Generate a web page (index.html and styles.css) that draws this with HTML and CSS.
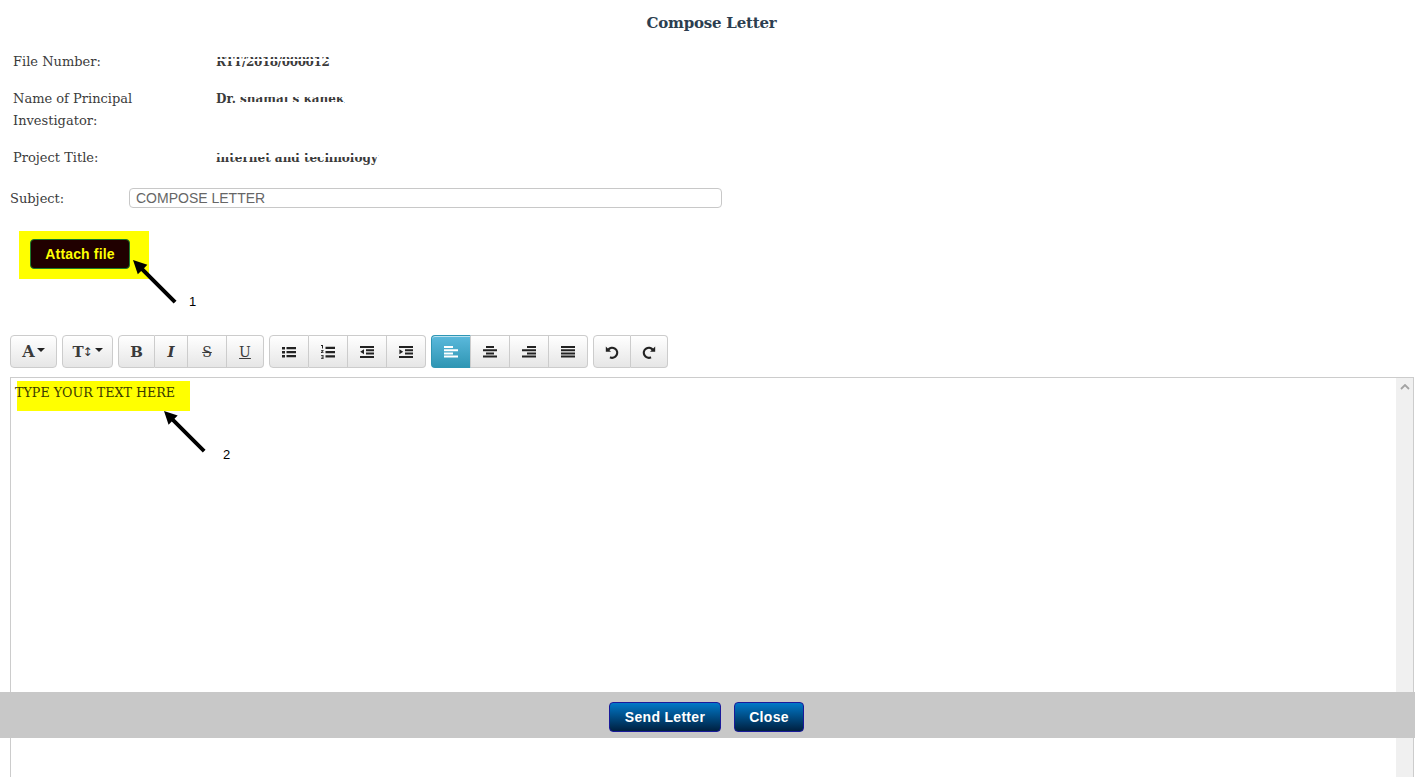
FILE: index.html
```html
<!DOCTYPE html>
<html lang="en">
<head>
  <meta charset="UTF-8">
  <title>Compose Letter</title>
  <link rel="stylesheet" href="styles.css">
</head>
<body>

  <h1 class="title">Compose Letter</h1>

  <table class="info">
    <tr>
      <td class="info-label">File Number:</td>
      <td><span class="hidden-value hide-file">RTT/2018/000012</span></td>
    </tr>
    <tr>
      <td class="info-label">Name of Principal Investigator:</td>
      <td><span class="hidden-value hide-name">Dr. shamal s kanek</span></td>
    </tr>
    <tr>
      <td class="info-label">Project Title:</td>
      <td><span class="hidden-value hide-project">internet and technology</span></td>
    </tr>
  </table>

  <div class="subject">
    <label class="subject-label" for="subject">Subject:</label>
    <input class="subject-input" type="text" id="subject" value="COMPOSE LETTER">
  </div>

  <div class="attach">
    <div class="attach-mark">
      <button class="btn-attach" type="button">Attach file</button>
    </div>
  </div>

  <div class="toolbar">
    <div class="group">
      <button class="tool tool-a" type="button"><span class="tool-letter">A</span><i class="caret"></i></button>
    </div>
    <div class="group">
      <button class="tool tool-t" type="button"><span class="tool-letter">T</span><span class="tool-arrow">↕</span><i class="caret"></i></button>
    </div>
    <div class="group">
      <button class="tool w37" type="button"><b class="tool-letter">B</b></button>
      <button class="tool w33" type="button"><i class="tool-letter tool-bold">I</i></button>
      <button class="tool w39" type="button"><s class="tool-letter small">S</s></button>
      <button class="tool w37" type="button"><u class="tool-letter small">U</u></button>
    </div>
    <div class="group">
      <button class="tool w40" type="button">
        <svg class="icon" viewBox="0 0 16 14"><path d="M1 2h3v2.400H1zM1 6h3v2.400H1zM1 10h3v2.400H1zM5.500 2.100H15v2.200H5.500zM5.500 6.100H15v2.200H5.500zM5.500 10.100H15v2.200H5.500z"/></svg>
      </button>
      <button class="tool w39" type="button">
        <svg class="icon" viewBox="0 0 16 14"><path d="M1 0h2v3.600H2V1H1zM1 5h2.500v1L2 7.200h1.500V8H1V7l1.600-1.200H1zM1 10h2.500v4H1v-.8h1.600v-.8H1.400v-.7h1.200v-.9H1zM5.500 1.700H15v2.200H5.500zM5.500 6H15v2.200H5.500zM5.500 10.300H15v2.200H5.500z"/></svg>
      </button>
      <button class="tool w39" type="button">
        <svg class="icon" viewBox="0 0 16 14"><path d="M1 1h14v2H1zM7 4.200h8v2H7zM7 7.400h8v2H7zM1 11h14v2H1zM5 4.300v5L1.200 6.800z"/></svg>
      </button>
      <button class="tool w39" type="button">
        <svg class="icon" viewBox="0 0 16 14"><path d="M1 1h14v2H1zM7 4.200h8v2H7zM7 7.400h8v2H7zM1 11h14v2H1zM1.400 4.300v5l3.800-2.500z"/></svg>
      </button>
    </div>
    <div class="group">
      <button class="tool w40 tool-on" type="button">
        <svg class="icon" viewBox="0 0 16 14"><path d="M1 1h9v2H1zM1 4.200h14v2H1zM1 7.400h9v2H1zM1 10.600h14v2H1z"/></svg>
      </button>
      <button class="tool w39" type="button">
        <svg class="icon" viewBox="0 0 16 14"><path d="M4 1h8v2H4zM1 4.200h14v2H1zM4 7.400h8v2H4zM1 10.600h14v2H1z"/></svg>
      </button>
      <button class="tool w39" type="button">
        <svg class="icon" viewBox="0 0 16 14"><path d="M6 1h9v2H6zM1 4.200h14v2H1zM6 7.400h9v2H6zM1 10.600h14v2H1z"/></svg>
      </button>
      <button class="tool w39" type="button">
        <svg class="icon" viewBox="0 0 16 14"><path d="M1 1h14v2H1zM1 4.200h14v2H1zM1 7.400h14v2H1zM1 10.600h14v2H1z"/></svg>
      </button>
    </div>
    <div class="group">
      <button class="tool w38" type="button">
        <svg class="icon" viewBox="0 0 16 14"><path class="line" d="M4.200 4.700A5 5 0 1 1 6 12.300"/><path d="M1.800 1.600v5.200H7z"/></svg>
      </button>
      <button class="tool w37" type="button">
        <svg class="icon" viewBox="0 0 16 14"><path class="line" d="M11.800 4.700A5 5 0 1 0 10 12.300"/><path d="M14.200 1.600v5.200H9z"/></svg>
      </button>
    </div>
  </div>

  <div class="editor">
    <div class="editor-text"><span class="editor-mark"></span><span class="editor-type">TYPE YOUR TEXT HERE</span></div>
    <div class="scrollbar">
      <svg class="scroll-up" viewBox="0 0 10 6"><path d="M1 5l4-4 4 4"/></svg>
    </div>
  </div>

  <div class="footer-bar">
    <button class="btn-blue btn-send" type="button">Send Letter</button>
    <button class="btn-blue btn-close" type="button">Close</button>
  </div>

  <!-- notas por cima da tela -->
  <svg class="pointer pointer-1" viewBox="0 0 46 46"><path d="M0 0l15 5-3.500 3.500 34 34-3 3-34-34-3.500 3.500z"/></svg>
  <span class="pointer-num num-1">1</span>
  <svg class="pointer pointer-2" viewBox="0 0 46 46"><path d="M0 0l15 5-3.500 3.500 34 34-3 3-34-34-3.500 3.500z"/></svg>
  <span class="pointer-num num-2">2</span>

</body>
</html>
```

FILE: styles.css
```css
html, body {
  height: 777px;
  overflow: hidden;
}
body {
  margin: 0;
  font-family: "DejaVu Serif", serif;
  font-size: 13px;
  color: #3b3b3b;
  background: #fff;
}
.title {
  margin: 0;
  padding: 12px 0 0 8px;
  height: 32px;
  text-align: center;
  font-size: 15px;
  line-height: 22px;
  font-weight: bold;
  letter-spacing: -0.2px;
  color: #2c3e50;
}
.info {
  border-collapse: collapse;
  margin: 0;
}
.info td {
  padding: 0;
  vertical-align: top;
  line-height: 22px;
}
.info tr:nth-child(1) td {
  padding-top: 7px;
  height: 30px;
}
.info tr:nth-child(2) td {
  padding-top: 7px;
  height: 52px;
}
.info tr:nth-child(3) td {
  padding-top: 7px;
  height: 25px;
}
.info-label {
  padding-left: 13px !important;
  padding-right: 60px !important;
  box-sizing: border-box;
  width: 216px;
}
.hidden-value {
  position: relative;
  display: inline-block;
  font-weight: bold;
  font-size: 12px;
}
.hidden-value::after {
  content: "";
  position: absolute;
  left: 0;
  right: 0;
  top: 0;
  bottom: 0;
}
.hide-file {
  letter-spacing: -0.4px;
}
.hide-file::after {
  background: linear-gradient(#fff 0, #fff 6px, transparent 6px, transparent 8px, #fff 8px, #fff 10px, transparent 10px);
}
.hide-name::after {
  left: 22px;
  background: linear-gradient(#fff 0, #fff 9px, transparent 9px, transparent 14px, #fff 14px);
}
.hide-project::after {
  background: linear-gradient(#fff 0, #fff 6px, transparent 6px, transparent 8px, #fff 8px, #fff 10px, transparent 10px);
}
.subject {
  display: flex;
  align-items: center;
  height: 20px;
  margin-top: 16px;
  padding-left: 10px;
}
.subject-label {
  width: 119px;
}
.subject-input {
  width: 593px;
  height: 20px;
  box-sizing: border-box;
  padding: 0 6px;
  border: 1px solid #c8c8c8;
  border-radius: 4px;
  font-family: "Liberation Sans", sans-serif;
  font-size: 14px;
  color: #666;
}
.attach {
  padding: 23px 0 0 19px;
  height: 104px;
  box-sizing: content-box;
}
.attach-mark {
  display: flex;
  width: 130px;
  height: 48px;
  padding: 8px 0 0 11px;
  box-sizing: border-box;
  background: #ff0;
}
.btn-attach {
  width: 100px;
  height: 30px;
  padding: 0;
  border: 1px solid #1c7a2a;
  border-radius: 4px;
  background: #200000;
  color: #ff0;
  font-family: "Liberation Sans", sans-serif;
  font-size: 14px;
  font-weight: bold;
  letter-spacing: 0.15px;
}
.toolbar {
  display: flex;
  gap: 5px;
  height: 33px;
  padding-left: 10px;
}
.group {
  display: flex;
}
.tool {
  display: flex;
  align-items: center;
  justify-content: center;
  height: 33px;
  padding: 0;
  border: 1px solid #ccc;
  border-left-width: 0;
  background: linear-gradient(#fff, #e6e6e6);
  box-shadow: inset 0 1px 0 rgba(255, 255, 255, 0.6);
  color: #333;
}
.tool:first-child {
  border-left-width: 1px;
  border-radius: 4px 0 0 4px;
}
.tool:last-child {
  border-radius: 0 4px 4px 0;
}
.tool:only-child {
  border-radius: 4px;
}
.tool-a { width: 47px; }
.tool-t { width: 51px; }
.w33 { width: 33px; }
.w37 { width: 37px; }
.w38 { width: 38px; }
.w39 { width: 39px; }
.w40 { width: 40px; }
.tool-on {
  background: linear-gradient(#5bb9dc, #2f96b4);
  border-color: #2f96b4 #ccc #2f96b4 #2f96b4;
  color: #fff;
}
.tool-letter {
  font-family: "DejaVu Serif", serif;
  font-size: 15px;
  color: #3a3a3a;
}
.tool-letter.small {
  font-size: 14px;
}
.tool-bold,
.tool-a .tool-letter,
.tool-t .tool-letter {
  font-weight: bold;
}
.tool-a .tool-letter {
  font-size: 16px;
}
.tool-arrow {
  font-family: "DejaVu Sans", sans-serif;
  font-size: 12px;
  margin-left: -1px;
}
.caret {
  width: 0;
  height: 0;
  margin: -3px 0 0 2px;
  border-left: 4px solid transparent;
  border-right: 4px solid transparent;
  border-top: 4px solid #222;
}
.icon {
  width: 16px;
  height: 14px;
  fill: #222;
}
.icon .line {
  fill: none;
  stroke: #222;
  stroke-width: 2.2;
}
.tool-on .icon {
  fill: #fff;
}
.editor {
  display: flex;
  justify-content: space-between;
  height: 420px;
  margin: 9px 1px 0 10px;
  border: 1px solid #ccc;
  border-bottom: 0;
}
.editor-text {
  position: relative;
  padding: 5px 0 0 4px;
  font-size: 12.7px;
  line-height: 20px;
  color: #333;
}
.editor-mark {
  position: absolute;
  left: 6px;
  top: 3px;
  width: 173px;
  height: 30px;
  background: #ff0;
}
.editor-type {
  position: relative;
  color: #3a3a00;
}
.scrollbar {
  width: 17px;
  background: #f0f0f0;
  text-align: center;
}
.scroll-up {
  width: 10px;
  height: 6px;
  margin-top: 6px;
  fill: none;
  stroke: #a3a3a3;
  stroke-width: 1.800;
}
.footer-bar {
  position: fixed;
  left: 0;
  right: 0;
  top: 692px;
  height: 46px;
  box-sizing: border-box;
  padding: 10px 2px 0 0;
  display: flex;
  align-items: flex-start;
  justify-content: center;
  gap: 13px;
  background: #c8c8c8;
}
.btn-blue {
  height: 30px;
  padding: 0;
  border: 1px solid #1a1a9a;
  border-radius: 4px;
  background: linear-gradient(#0078c8, #002040);
  color: #fff;
  font-family: "Liberation Sans", sans-serif;
  font-size: 14px;
  font-weight: bold;
  letter-spacing: 0.3px;
}
.btn-send { width: 112px; }
.btn-close { width: 70px; }
.pointer {
  position: absolute;
  fill: #000;
}
.pointer-1 { left: 133px; top: 260px; width: 44px; height: 44px; }
.pointer-2 { left: 164px; top: 411px; width: 42px; height: 42px; }
.pointer-num {
  position: absolute;
  font-family: "Liberation Sans", sans-serif;
  font-size: 13px;
  color: #000;
}
.num-1 { left: 189px; top: 294px; }
.num-2 { left: 223px; top: 447px; }
```
